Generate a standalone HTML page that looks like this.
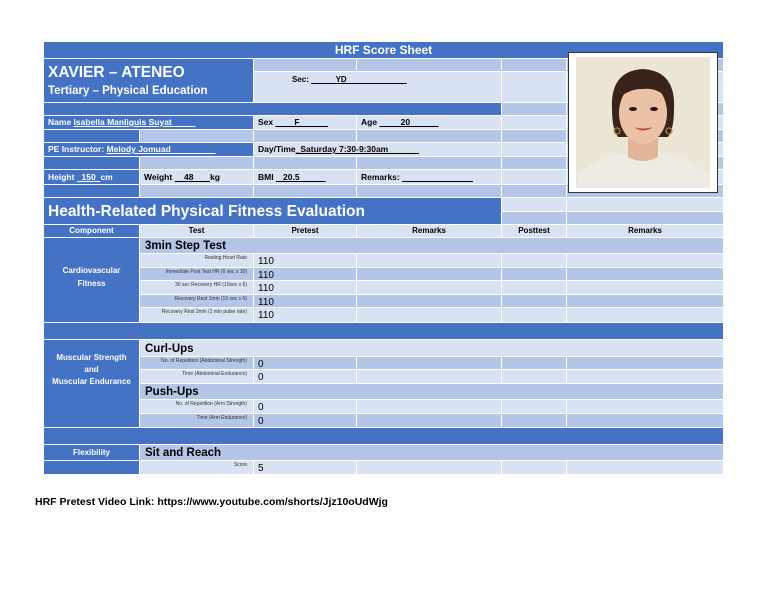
<!DOCTYPE html>
<html><head><meta charset="utf-8"><style>
*{margin:0;padding:0}
body{width:768px;height:594px;background:#fff;position:relative;overflow:hidden;font-family:"Liberation Sans",sans-serif;font-weight:bold;color:#000}
.c{position:absolute;box-sizing:border-box;border-right:1px solid #fff;border-bottom:1px solid #fff;white-space:nowrap;overflow:hidden}
.D{background:#4472c4;color:#fff}
.L{background:#d9e2f3}
.M{background:#b4c6e7}
.f9{font-size:8.5px;line-height:13px;padding-left:4px}
.t{font-size:5px;font-weight:normal;text-align:right;padding-right:6px;line-height:9px;color:#333}
.v{font-size:10px;font-weight:normal;padding-left:4px;line-height:16px}
.sh{font-size:11.5px;padding-left:5px;line-height:16px}
.hd{font-size:8px;text-align:center;line-height:12px}
u{text-decoration:underline}
</style></head><body>
<div class="c D" style="left:44px;top:42px;width:680px;height:17px;font-size:12px;text-align:center;line-height:17px">HRF Score Sheet</div>
<div class="c D" style="left:44px;top:59px;width:210px;height:44px"><div style="font-size:15.5px;padding:5px 0 0 4px">XAVIER – ATENEO</div><div style="font-size:11.5px;padding:3px 0 0 4px">Tertiary – Physical Education</div></div>
<div class="c M" style="left:254px;top:59px;width:103px;height:13px"></div>
<div class="c M" style="left:357px;top:59px;width:145px;height:13px"></div>
<div class="c M" style="left:502px;top:59px;width:65px;height:13px"></div>
<div class="c M" style="left:567px;top:59px;width:157px;height:13px"></div>
<div class="c L" style="left:254px;top:72px;width:248px;height:31px;font-size:8px;padding:3px 0 0 38px">Sec: <u>&nbsp;&nbsp;&nbsp;&nbsp;&nbsp;&nbsp;&nbsp;&nbsp;&nbsp;&nbsp;&nbsp;YD&nbsp;&nbsp;&nbsp;&nbsp;&nbsp;&nbsp;&nbsp;&nbsp;&nbsp;&nbsp;&nbsp;&nbsp;&nbsp;&nbsp;&nbsp;&nbsp;&nbsp;&nbsp;&nbsp;&nbsp;&nbsp;&nbsp;&nbsp;&nbsp;&nbsp;&nbsp;&nbsp;</u></div>
<div class="c L" style="left:502px;top:72px;width:65px;height:31px"></div>
<div class="c L" style="left:567px;top:72px;width:157px;height:31px"></div>
<div class="c D" style="left:44px;top:103px;width:458px;height:13px"></div>
<div class="c M" style="left:502px;top:103px;width:65px;height:13px"></div>
<div class="c M" style="left:567px;top:103px;width:157px;height:13px"></div>
<div class="c D f9" style="left:44px;top:116px;width:210px;height:14px">Name <u>Isabella Manliguis Suyat&nbsp;&nbsp;&nbsp;&nbsp;&nbsp;&nbsp;&nbsp;&nbsp;&nbsp;&nbsp;</u></div>
<div class="c L f9" style="left:254px;top:116px;width:103px;height:14px">Sex <u>&nbsp;&nbsp;&nbsp;&nbsp;&nbsp;&nbsp;&nbsp;&nbsp;F&nbsp;&nbsp;&nbsp;&nbsp;&nbsp;&nbsp;&nbsp;&nbsp;&nbsp;&nbsp;&nbsp;&nbsp;</u></div>
<div class="c L f9" style="left:357px;top:116px;width:145px;height:14px">Age <u>&nbsp;&nbsp;&nbsp;&nbsp;&nbsp;&nbsp;&nbsp;&nbsp;&nbsp;20&nbsp;&nbsp;&nbsp;&nbsp;&nbsp;&nbsp;&nbsp;&nbsp;&nbsp;&nbsp;&nbsp;&nbsp;</u></div>
<div class="c L" style="left:502px;top:116px;width:65px;height:14px"></div>
<div class="c L" style="left:567px;top:116px;width:157px;height:14px"></div>
<div class="c D" style="left:44px;top:130px;width:96px;height:13px"></div>
<div class="c M" style="left:140px;top:130px;width:114px;height:13px"></div>
<div class="c M" style="left:254px;top:130px;width:103px;height:13px"></div>
<div class="c M" style="left:357px;top:130px;width:145px;height:13px"></div>
<div class="c M" style="left:502px;top:130px;width:65px;height:13px"></div>
<div class="c M" style="left:567px;top:130px;width:157px;height:13px"></div>
<div class="c D f9" style="left:44px;top:143px;width:210px;height:14px">PE Instructor: <u>Melody Jomuad&nbsp;&nbsp;&nbsp;&nbsp;&nbsp;&nbsp;&nbsp;&nbsp;&nbsp;&nbsp;&nbsp;&nbsp;&nbsp;&nbsp;&nbsp;&nbsp;&nbsp;&nbsp;&nbsp;</u></div>
<div class="c L f9" style="left:254px;top:143px;width:248px;height:14px">Day/Time<u>_Saturday 7:30-9:30am&nbsp;&nbsp;&nbsp;&nbsp;&nbsp;&nbsp;&nbsp;&nbsp;&nbsp;&nbsp;&nbsp;&nbsp;&nbsp;</u></div>
<div class="c L" style="left:502px;top:143px;width:65px;height:14px"></div>
<div class="c L" style="left:567px;top:143px;width:157px;height:14px"></div>
<div class="c D" style="left:44px;top:157px;width:96px;height:13px"></div>
<div class="c M" style="left:140px;top:157px;width:114px;height:13px"></div>
<div class="c M" style="left:254px;top:157px;width:103px;height:13px"></div>
<div class="c M" style="left:357px;top:157px;width:145px;height:13px"></div>
<div class="c M" style="left:502px;top:157px;width:65px;height:13px"></div>
<div class="c M" style="left:567px;top:157px;width:157px;height:13px"></div>
<div class="c D f9" style="left:44px;top:170px;width:96px;height:15px;line-height:15px">Height <u>&nbsp;&nbsp;150&nbsp;&nbsp;</u>cm</div>
<div class="c L f9" style="left:140px;top:170px;width:114px;height:15px;line-height:15px">Weight <u>&nbsp;&nbsp;&nbsp;&nbsp;48&nbsp;&nbsp;&nbsp;&nbsp;&nbsp;&nbsp;&nbsp;</u>kg</div>
<div class="c L f9" style="left:254px;top:170px;width:103px;height:15px;line-height:15px">BMI <u>&nbsp;&nbsp;&nbsp;20.5&nbsp;&nbsp;&nbsp;&nbsp;&nbsp;&nbsp;&nbsp;&nbsp;&nbsp;&nbsp;&nbsp;</u></div>
<div class="c L f9" style="left:357px;top:170px;width:145px;height:15px;line-height:15px">Remarks: <u>&nbsp;&nbsp;&nbsp;&nbsp;&nbsp;&nbsp;&nbsp;&nbsp;&nbsp;&nbsp;&nbsp;&nbsp;&nbsp;&nbsp;&nbsp;&nbsp;&nbsp;&nbsp;&nbsp;&nbsp;&nbsp;&nbsp;&nbsp;&nbsp;&nbsp;&nbsp;&nbsp;&nbsp;&nbsp;&nbsp;</u></div>
<div class="c L" style="left:502px;top:170px;width:65px;height:15px"></div>
<div class="c L" style="left:567px;top:170px;width:157px;height:15px"></div>
<div class="c D" style="left:44px;top:185px;width:96px;height:13px"></div>
<div class="c M" style="left:140px;top:185px;width:114px;height:13px"></div>
<div class="c M" style="left:254px;top:185px;width:103px;height:13px"></div>
<div class="c M" style="left:357px;top:185px;width:145px;height:13px"></div>
<div class="c M" style="left:502px;top:185px;width:65px;height:13px"></div>
<div class="c M" style="left:567px;top:185px;width:157px;height:13px"></div>
<div class="c D" style="left:44px;top:198px;width:458px;height:27px;font-size:15.5px;line-height:27px;padding-left:4px">Health-Related Physical Fitness Evaluation</div>
<div class="c L" style="left:502px;top:198px;width:65px;height:14px"></div>
<div class="c L" style="left:567px;top:198px;width:157px;height:14px"></div>
<div class="c M" style="left:502px;top:212px;width:65px;height:13px"></div>
<div class="c M" style="left:567px;top:212px;width:157px;height:13px"></div>
<div class="c D hd" style="left:44px;top:225px;width:96px;height:13px">Component</div>
<div class="c L hd" style="left:140px;top:225px;width:114px;height:13px">Test</div>
<div class="c L hd" style="left:254px;top:225px;width:103px;height:13px">Pretest</div>
<div class="c L hd" style="left:357px;top:225px;width:145px;height:13px">Remarks</div>
<div class="c L hd" style="left:502px;top:225px;width:65px;height:13px">Posttest</div>
<div class="c L hd" style="left:567px;top:225px;width:157px;height:13px">Remarks</div>
<div class="c D" style="left:44px;top:238px;width:96px;height:85px;font-size:8px;text-align:center;line-height:13px;padding-top:26px">Cardiovascular<br>Fitness</div>
<div class="c M sh" style="left:140px;top:238px;width:584px;height:16px">3min Step Test</div>
<div class="c L t" style="left:140px;top:254px;width:114px;height:14px">Resting Heart Rate</div><div class="c L v" style="left:254px;top:254px;width:103px;height:14px">110</div><div class="c L" style="left:357px;top:254px;width:145px;height:14px"></div><div class="c L" style="left:502px;top:254px;width:65px;height:14px"></div><div class="c L" style="left:567px;top:254px;width:157px;height:14px"></div>
<div class="c M t" style="left:140px;top:268px;width:114px;height:13px">Immediate Post Test HR (6 sec x 10)</div><div class="c M v" style="left:254px;top:268px;width:103px;height:13px">110</div><div class="c M" style="left:357px;top:268px;width:145px;height:13px"></div><div class="c M" style="left:502px;top:268px;width:65px;height:13px"></div><div class="c M" style="left:567px;top:268px;width:157px;height:13px"></div>
<div class="c L t" style="left:140px;top:281px;width:114px;height:14px">30 sec Recovery HR (10sec x 6)</div><div class="c L v" style="left:254px;top:281px;width:103px;height:14px">110</div><div class="c L" style="left:357px;top:281px;width:145px;height:14px"></div><div class="c L" style="left:502px;top:281px;width:65px;height:14px"></div><div class="c L" style="left:567px;top:281px;width:157px;height:14px"></div>
<div class="c M t" style="left:140px;top:295px;width:114px;height:13px">Recovery Rest 1min (10 sec x 6)</div><div class="c M v" style="left:254px;top:295px;width:103px;height:13px">110</div><div class="c M" style="left:357px;top:295px;width:145px;height:13px"></div><div class="c M" style="left:502px;top:295px;width:65px;height:13px"></div><div class="c M" style="left:567px;top:295px;width:157px;height:13px"></div>
<div class="c L t" style="left:140px;top:308px;width:114px;height:15px">Recovery Rest 2min (1 min pulse rate)</div><div class="c L v" style="left:254px;top:308px;width:103px;height:15px">110</div><div class="c L" style="left:357px;top:308px;width:145px;height:15px"></div><div class="c L" style="left:502px;top:308px;width:65px;height:15px"></div><div class="c L" style="left:567px;top:308px;width:157px;height:15px"></div>
<div class="c D" style="left:44px;top:323px;width:680px;height:17px"></div>
<div class="c D" style="left:44px;top:340px;width:96px;height:88px;font-size:8px;text-align:center;line-height:12px;padding-top:12px">Muscular Strength<br>and<br>Muscular Endurance</div>
<div class="c L sh" style="left:140px;top:340px;width:584px;height:17px;line-height:18px">Curl-Ups</div>
<div class="c M t" style="left:140px;top:357px;width:114px;height:13px">No. of Repetition (Abdominal Strength)</div><div class="c M v" style="left:254px;top:357px;width:103px;height:13px">0</div><div class="c M" style="left:357px;top:357px;width:145px;height:13px"></div><div class="c M" style="left:502px;top:357px;width:65px;height:13px"></div><div class="c M" style="left:567px;top:357px;width:157px;height:13px"></div>
<div class="c L t" style="left:140px;top:370px;width:114px;height:14px">Time (Abdominal Endurance)</div><div class="c L v" style="left:254px;top:370px;width:103px;height:14px">0</div><div class="c L" style="left:357px;top:370px;width:145px;height:14px"></div><div class="c L" style="left:502px;top:370px;width:65px;height:14px"></div><div class="c L" style="left:567px;top:370px;width:157px;height:14px"></div>
<div class="c M sh" style="left:140px;top:384px;width:584px;height:16px">Push-Ups</div>
<div class="c L t" style="left:140px;top:400px;width:114px;height:14px">No. of Repetition (Arm Strength)</div><div class="c L v" style="left:254px;top:400px;width:103px;height:14px">0</div><div class="c L" style="left:357px;top:400px;width:145px;height:14px"></div><div class="c L" style="left:502px;top:400px;width:65px;height:14px"></div><div class="c L" style="left:567px;top:400px;width:157px;height:14px"></div>
<div class="c M t" style="left:140px;top:414px;width:114px;height:14px">Time (Arm Endurance)</div><div class="c M v" style="left:254px;top:414px;width:103px;height:14px">0</div><div class="c M" style="left:357px;top:414px;width:145px;height:14px"></div><div class="c M" style="left:502px;top:414px;width:65px;height:14px"></div><div class="c M" style="left:567px;top:414px;width:157px;height:14px"></div>
<div class="c D" style="left:44px;top:428px;width:680px;height:17px"></div>
<div class="c D hd" style="left:44px;top:445px;width:96px;height:16px;line-height:15px">Flexibility</div>
<div class="c M sh" style="left:140px;top:445px;width:584px;height:16px">Sit and Reach</div>
<div class="c D" style="left:44px;top:461px;width:96px;height:14px"></div>
<div class="c L t" style="left:140px;top:461px;width:114px;height:14px">Score</div><div class="c L v" style="left:254px;top:461px;width:103px;height:14px">5</div><div class="c L" style="left:357px;top:461px;width:145px;height:14px"></div><div class="c L" style="left:502px;top:461px;width:65px;height:14px"></div><div class="c L" style="left:567px;top:461px;width:157px;height:14px"></div>
<div style="position:absolute;left:568px;top:52px;width:150px;height:141px;background:#fff;border:1px solid #333;box-sizing:border-box"></div>
<svg style="position:absolute;left:576px;top:57px" width="134" height="131" viewBox="0 0 134 131">
<rect width="134" height="131" fill="#ece6d6"/>
<path d="M0 131 L2 118 Q20 100 50 96 L84 96 Q115 100 132 118 L134 131Z" fill="#eeebe4"/>
<path d="M52 80 L52 100 Q67 108 82 100 L82 80Z" fill="#e2b59a"/>
<path d="M36 52 Q34 14 67 12 Q100 14 98 52 Q98 72 92 80 L42 80 Q36 72 36 52Z" fill="#3a241a"/>
<ellipse cx="67" cy="56" rx="24" ry="31" fill="#ecc2a7"/>
<path d="M42 42 Q50 22 70 24 Q88 26 92 44 Q84 30 66 32 Q52 32 42 42Z" fill="#3a241a"/>
<ellipse cx="57" cy="52" rx="4" ry="2" fill="#2a1a12"/>
<ellipse cx="78" cy="52" rx="4" ry="2" fill="#2a1a12"/>
<path d="M58 70 Q67 77 77 70 Q67 73 58 70Z" fill="#c4463f"/>
<circle cx="41" cy="74" r="3" fill="none" stroke="#b08a4a" stroke-width="1.2"/>
<circle cx="93" cy="74" r="3" fill="none" stroke="#b08a4a" stroke-width="1.2"/>
</svg>
<div style="position:absolute;left:35px;top:496px;font-size:10.5px">HRF Pretest Video Link: https://www.youtube.com/shorts/Jjz10oUdWjg</div>
</body></html>
